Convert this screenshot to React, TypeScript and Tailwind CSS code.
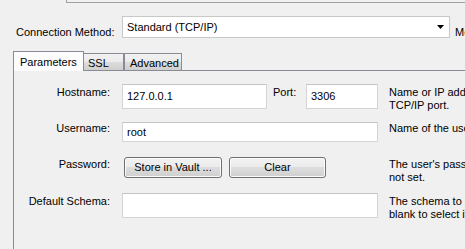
export default function App() {
  const input = 'shrink-0 bg-white border border-[#d4d4d4] border-t-[#c2c4c8] flex items-center pl-[4px]'
  const button =
    'shrink-0 rounded-[3px] border border-[#707070] bg-[linear-gradient(to_bottom,#f2f2f2_0%,#ebebeb_50%,#dddddd_50%,#cfcfcf_100%)] shadow-[inset_0_0_0_1px_#fbfbfb] flex items-center justify-center'
  const tab =
    'shrink-0 h-[17px] border-t border-[#898c95] bg-[linear-gradient(to_bottom,#f2f2f2_0%,#ebebeb_50%,#dddddd_50%,#cfcfcf_100%)] pt-[3px]'
  const label = 'shrink-0 w-[96px] text-right'

  return (
    <div className="w-[465px] h-[249px] overflow-hidden bg-[#f0f0f0] text-[11px] leading-[13px] text-black font-['Liberation_Sans',Arial,sans-serif] whitespace-nowrap flex flex-col">
      {/* box above, cut off */}
      <div className="shrink-0 ml-[66px] h-[3px] border-l border-b border-[#a0a0a0] bg-[#f0f0f0]" />

      {/* connection method */}
      <div className="shrink-0 mt-[13px] flex items-start h-[22px]">
        <div className="shrink-0 ml-[16px] w-[106px] pt-[10px]">Connection Method:</div>
        <div className="shrink-0 w-[328px] h-[22px] bg-white border border-[#c8c8c8] flex items-center pl-[4px]">
          <span>Standard (TCP/IP)</span>
          <svg className="ml-auto mr-[5px]" width="7" height="4" viewBox="0 0 7 4">
            <path d="M0 0H7L3.5 4Z" fill="#000" />
          </svg>
        </div>
        <div className="shrink-0 ml-[5px] pt-[10px]">Method</div>
      </div>

      {/* tabs */}
      <div className="shrink-0 mt-[13px] ml-[13px] h-[19px] flex items-end">
        <div className="shrink-0 relative z-10 -mb-[1px] h-[20px] w-[71px] border-l border-t border-r border-[#898c95] bg-[#fcfcfc] pl-[6px] pt-[4px]">
          Parameters
        </div>
        <div className={`${tab} w-[40px] border-r pl-[4px]`}>SSL</div>
        <div className={`${tab} w-[58px] border-l border-r pl-[5px]`}>Advanced</div>
      </div>

      {/* panel */}
      <div className="ml-[13px] flex-1 border-l border-t border-[#898c95] bg-[#f0f0f0] flex flex-col">
        <div className="shrink-0 mt-[13px] h-[25px] flex items-start">
          <div className={`${label} pt-[2px]`}>Hostname:</div>
          <div className={`${input} ml-[12px] w-[145px] h-[25px]`}>127.0.0.1</div>
          <div className="shrink-0 ml-[6px] w-[33px] pt-[2px]">Port:</div>
          <div className={`${input} w-[72px] h-[25px]`}>3306</div>
          <div className="shrink-0 ml-[11px] pt-[2px]">
            <div>Name or IP address of the server host - and</div>
            <div>TCP/IP port.</div>
          </div>
        </div>

        <div className="shrink-0 mt-[13px] h-[20px] flex items-start">
          <div className={label}>Username:</div>
          <div className={`${input} ml-[12px] w-[256px] h-[20px]`}>root</div>
          <div className="shrink-0 ml-[11px]">Name of the user to connect with.</div>
        </div>

        <div className="shrink-0 mt-[14px] h-[26px] flex items-start">
          <div className={`${label} pt-[2px]`}>Password:</div>
          <button className={`${button} ml-[14px] mt-[1px] w-[98px] h-[21px]`}>Store in Vault ...</button>
          <button className={`${button} ml-[7px] mt-[1px] w-[97px] h-[21px]`}>Clear</button>
          <div className="shrink-0 ml-[63px] pt-[2px]">
            <div>The user's password. Will be requested later if it's</div>
            <div>not set.</div>
          </div>
        </div>

        <div className="shrink-0 mt-[11px] h-[26px] flex items-start">
          <div className={`${label} pt-[2px]`}>Default Schema:</div>
          <div className={`${input} ml-[12px] w-[256px] h-[25px]`} />
          <div className="shrink-0 ml-[11px] pt-[2px]">
            <div>The schema to use as default schema. Leave</div>
            <div>blank to select it later.</div>
          </div>
        </div>
      </div>
    </div>
  )
}
